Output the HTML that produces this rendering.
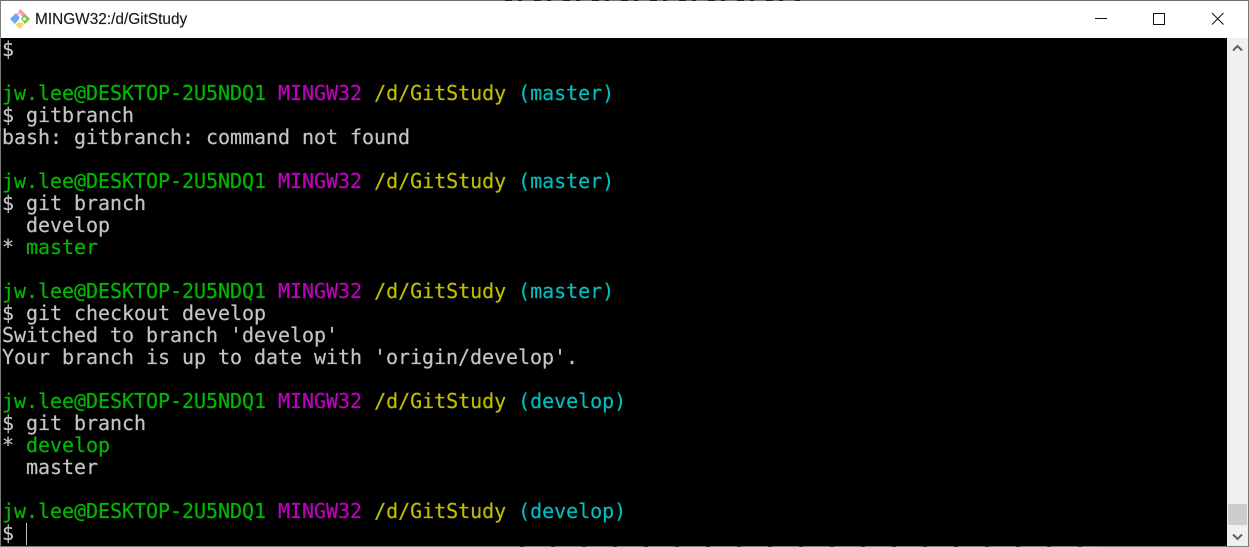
<!DOCTYPE html>
<html>
<head>
<meta charset="utf-8">
<style>
html,body{margin:0;padding:0;width:1249px;height:547px;overflow:hidden;background:#fff}
#win{position:absolute;left:0;top:0;width:1249px;height:547px;background:#fff;overflow:hidden}
#top{position:absolute;left:0;top:0;width:1249px;height:1px;background:#6e6e6e}
#topd{position:absolute;left:505px;top:0;width:295px;height:1px;background:repeating-linear-gradient(90deg,#222 0 7px,#777 7px 13px,#222 13px 17px,#777 17px 29px)}
#left{position:absolute;left:0;top:0;width:1px;height:547px;background:#7a7a7a}
#right{position:absolute;right:0;top:0;width:1px;height:547px;background:#7a7a7a}
#bot{position:absolute;left:0;top:546px;width:1249px;height:1px;background:#7a7a7a}
#botd{position:absolute;left:520px;top:546px;width:580px;height:1px;background:repeating-linear-gradient(90deg,#333 0 4px,#808080 4px 31px)}
#title{position:absolute;left:35px;top:9px;font:15.4px/22px "Liberation Sans",sans-serif;color:#1a1a1a;-webkit-text-stroke:0.15px #1a1a1a}
#term{position:absolute;left:1px;top:38px;width:1226px;height:508px;background:#000}
#sb{position:absolute;left:1227px;top:38px;width:21px;height:508px;background:#f0f0f0}
#thumb{position:absolute;left:1px;top:466px;width:19px;height:21px;background:#cdcdcd}
pre{position:absolute;left:2px;top:38px;margin:0;font:20px/22px "DejaVu Sans Mono","Liberation Mono",monospace;letter-spacing:-0.04px;color:#c4c4c4;-webkit-text-stroke:0.2px currentColor}
.g{color:#00b800}.m{color:#bf00bf}.y{color:#bfbf00}.c{color:#00bfbf}
#cur{position:absolute;left:26px;top:523px;width:1px;height:22px;background:#bfbfbf}
svg{position:absolute}
</style>
</head>
<body>
<div id="win">
<div id="top"></div>
<div id="topd"></div>
<svg style="left:9px;top:8px" width="22" height="22" viewBox="0 0 22 22">
<polygon points="11,1 17,6.500 14,9 11,6.500 8,7" fill="#f59a9a"/>
<polygon points="1,11 7,5 11,10 6,16" fill="#6ea6f7"/>
<polygon points="16,6 21,11 16,16 12,11" fill="#7fc04a"/>
<polygon points="11,13 15,16.500 11,21 6.500,17" fill="#f8d85e"/>
<circle cx="15.500" cy="11" r="1.500" fill="#fff"/>
<path d="M11 5 L11 15" stroke="#fff" stroke-width="1.200"/>
</svg>
<div id="title">MINGW32:/d/GitStudy</div>
<svg style="left:1090px;top:8px" width="150" height="24" viewBox="0 0 150 24">
<path d="M5 10.500H17" stroke="#111" stroke-width="1"/>
<rect x="63.500" y="5.500" width="11" height="11" fill="none" stroke="#111" stroke-width="1"/>
<path d="M122 5 L133.500 16.500 M133.500 5 L122 16.500" stroke="#111" stroke-width="1"/>
</svg>
<div id="term"></div>
<div id="sb">
<svg style="left:5px;top:6px" width="11" height="8" viewBox="0 0 11 8"><path d="M1 6.500 L5.500 2 L10 6.500" fill="none" stroke="#606060" stroke-width="2"/></svg>
<div id="thumb"></div>
<svg style="left:5px;top:495px" width="11" height="8" viewBox="0 0 11 8"><path d="M1 1.500 L5.500 6 L10 1.500" fill="none" stroke="#606060" stroke-width="2"/></svg>
</div>
<pre>$

<span class="g">jw.lee@DESKTOP-2U5NDQ1</span> <span class="m">MINGW32</span> <span class="y">/d/GitStudy</span> <span class="c">(master)</span>
$ gitbranch
bash: gitbranch: command not found

<span class="g">jw.lee@DESKTOP-2U5NDQ1</span> <span class="m">MINGW32</span> <span class="y">/d/GitStudy</span> <span class="c">(master)</span>
$ git branch
  develop
* <span class="g">master</span>

<span class="g">jw.lee@DESKTOP-2U5NDQ1</span> <span class="m">MINGW32</span> <span class="y">/d/GitStudy</span> <span class="c">(master)</span>
$ git checkout develop
Switched to branch 'develop'
Your branch is up to date with 'origin/develop'.

<span class="g">jw.lee@DESKTOP-2U5NDQ1</span> <span class="m">MINGW32</span> <span class="y">/d/GitStudy</span> <span class="c">(develop)</span>
$ git branch
* <span class="g">develop</span>
  master

<span class="g">jw.lee@DESKTOP-2U5NDQ1</span> <span class="m">MINGW32</span> <span class="y">/d/GitStudy</span> <span class="c">(develop)</span>
$</pre>
<div id="cur"></div>
<div id="left"></div>
<div id="right"></div>
<div id="bot"></div>
<div id="botd"></div>
</div>
</body>
</html>
